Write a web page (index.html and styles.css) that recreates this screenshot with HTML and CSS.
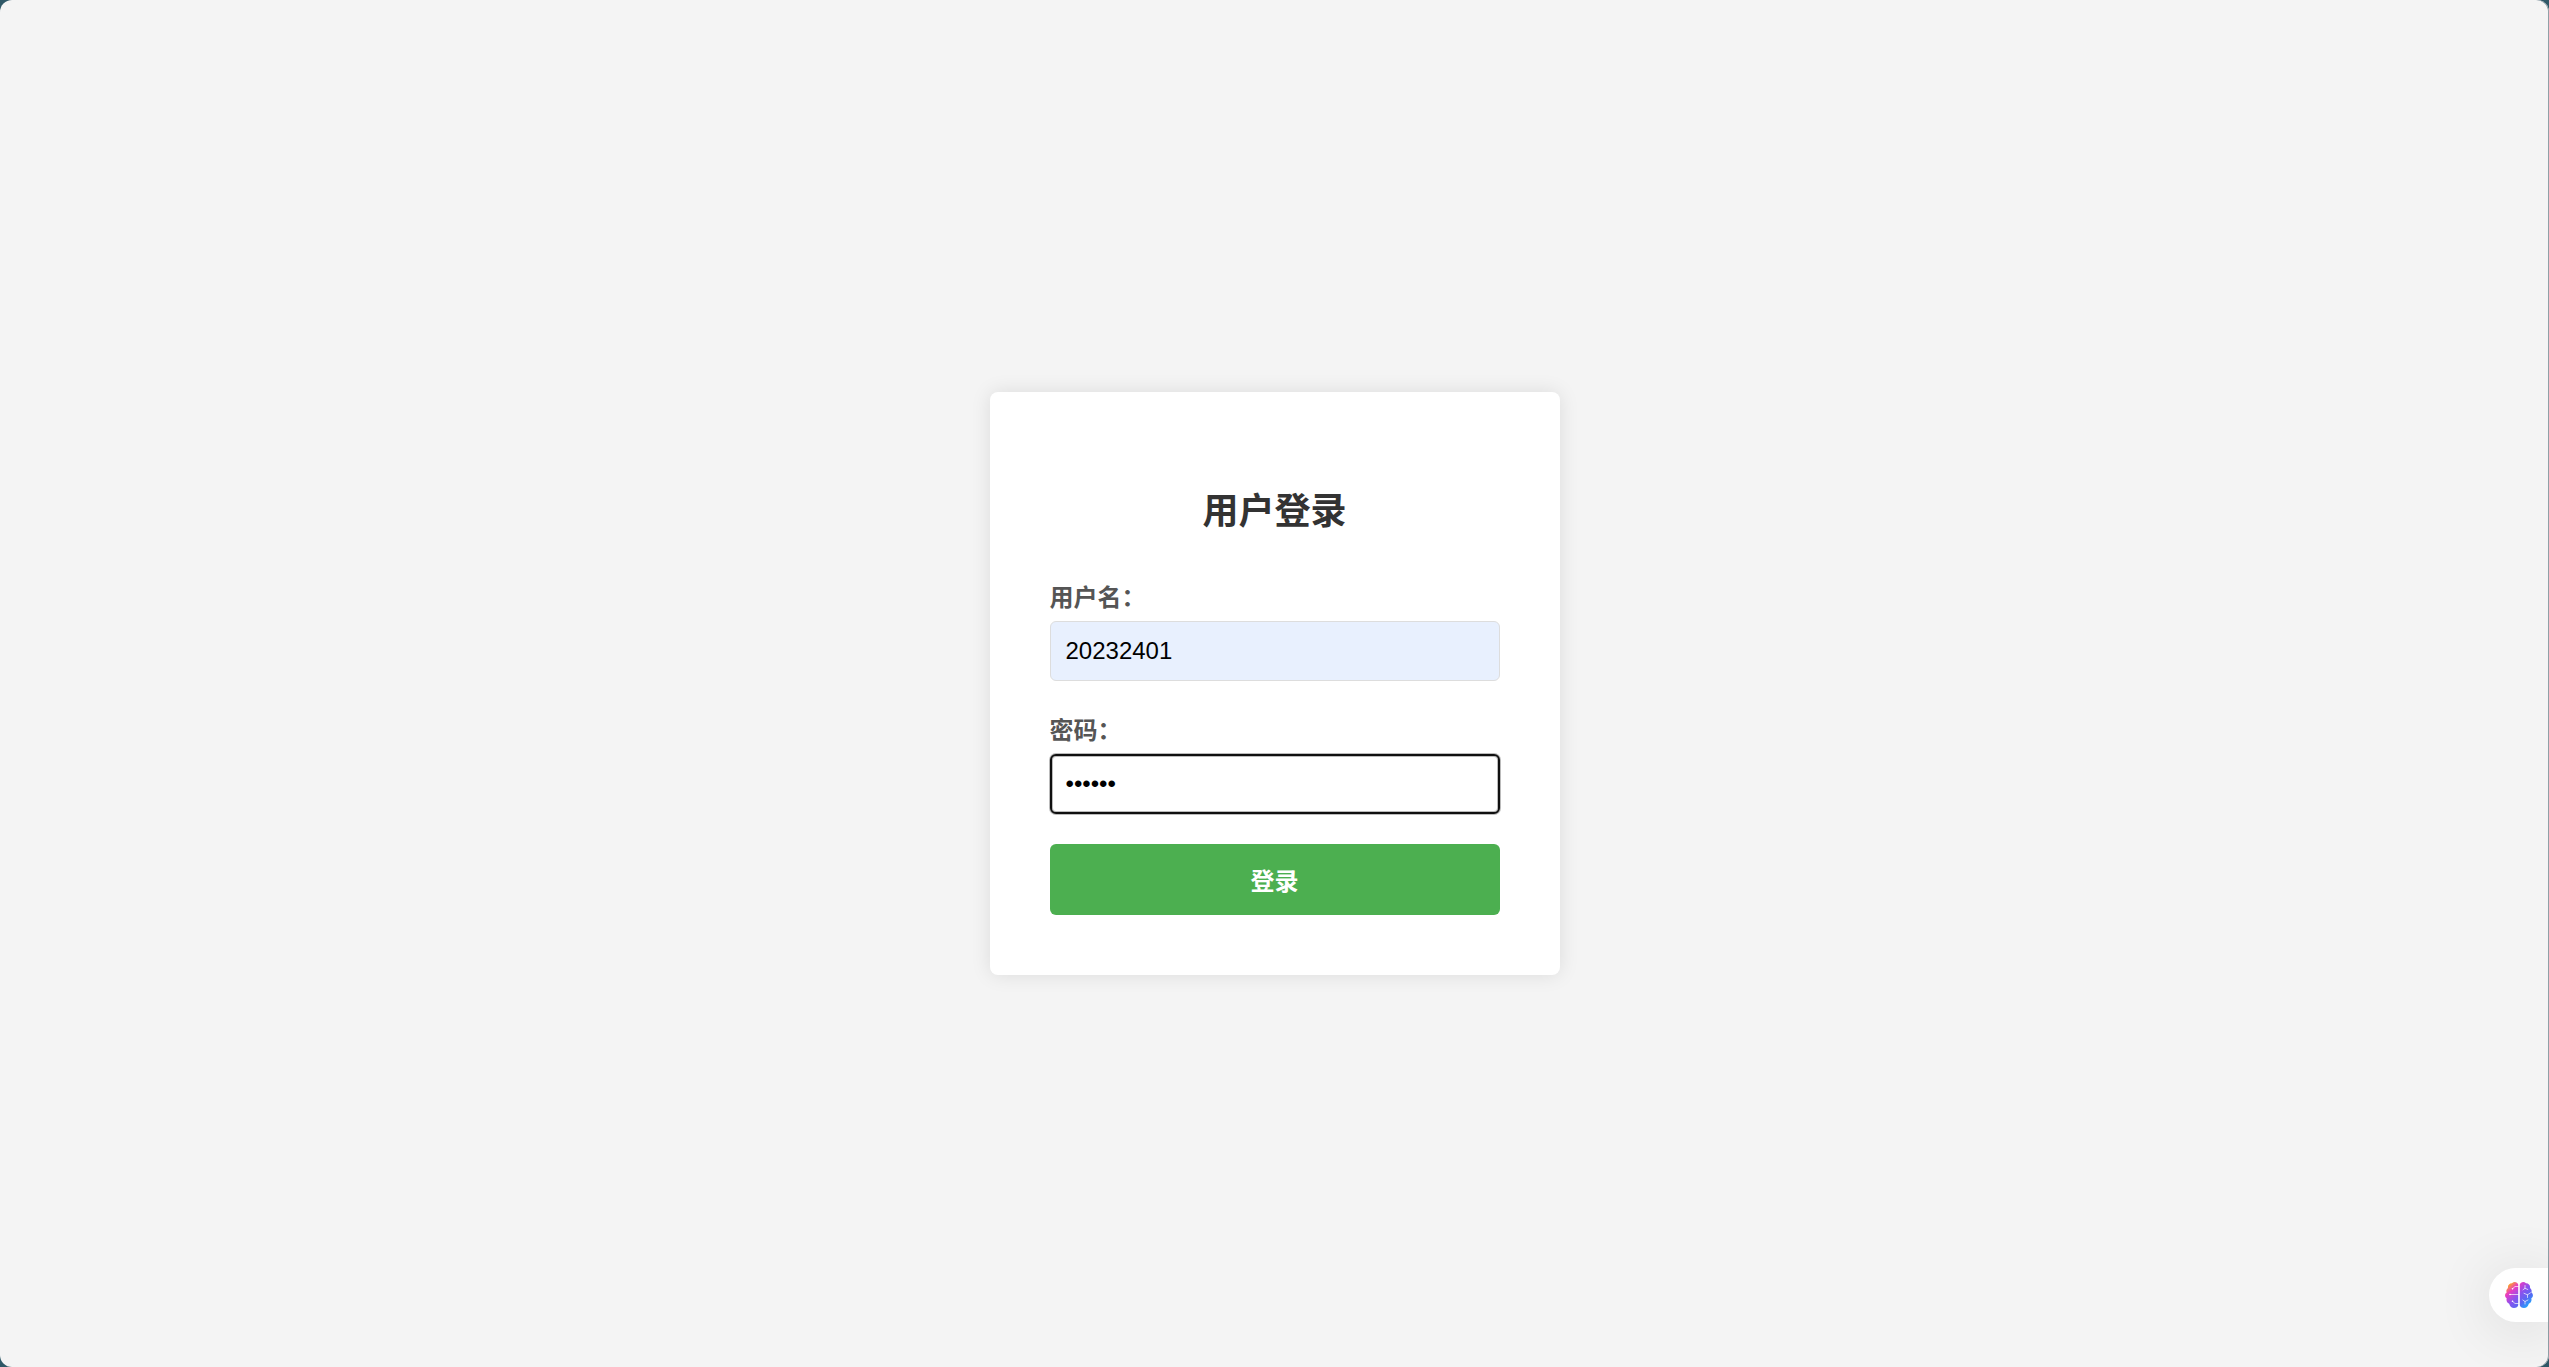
FILE: index.html
```html
<!DOCTYPE html>
<html lang="zh-CN">

<head>
    <meta charset="utf-8" />
    <meta name="viewport" content="width=device-width, initial-scale=1.0">
    <title>用户登录</title>
    <link rel="stylesheet" href="styles.css">
</head>

<body>
    <main class="page">
        <form class="login-container">
            <h2 class="login-title">用户登录</h2>
            <div class="form-group">
                <label for="username">用户名&#65306;</label>
                <input type="text" class="filled" id="username" name="username" value="20232401" required>
            </div>
            <div class="form-group">
                <label for="password">密码&#65306;</label>
                <input type="password" class="active" id="password" name="password" value="123456" required>
            </div>
            <button type="submit" class="login-btn">登录</button>
        </form>
    </main>

    <button type="button" class="assistant-btn" aria-label="AI">
        <svg class="brain-icon" viewBox="0 0 28 28" aria-hidden="true">
            <defs>
                <linearGradient id="brainFill" x1="0" y1="0" x2="1" y2="1">
                    <stop offset="0.1" stop-color="#ffae1a" />
                    <stop offset="0.28" stop-color="#e83bc4" />
                    <stop offset="0.5" stop-color="#8a52ee" />
                    <stop offset="0.7" stop-color="#5968f2" />
                    <stop offset="0.92" stop-color="#16b4ff" />
                </linearGradient>
            </defs>
            <path fill="url(#brainFill)" d="M13.2 3.5C12.5 1 9 .2 7 2.3 4.400 2.200 2.500 4.400 3 7 1.300 8.200 1 10 1.700 11.500-.6 13-.4 16 1.700 17.200 1 20 2 22 4.200 22.700 4.800 25.400 6.800 27 9 27c2.200 0 4-1 4.200-3zM14.800 3.500C15.500 1 19 .2 21 2.300c2.600-.1 4.500 2.100 4 4.700 1.700 1.200 2 3 1.300 4.500 2.300 1.500 2.100 4.500 0 5.700.7 2.800-.3 4.800-2.500 5.500-.6 2.700-2.600 4.300-4.800 4.300-2.200 0-4-1-4.200-3z" />
            <g fill="none" stroke="#fff" stroke-opacity="0.75" stroke-width="0.9" stroke-linecap="round" stroke-linejoin="round">
                <path d="M13.500 5.500H10L7.500 7.800M13.500 13.500H5M13.500 22.500H10L7.500 20.300" />
                <path d="M18 8.800l2-1.500V4.500M20 7.300l2.800 1.200M19 12.300l3.500 1.500 3-2M22.500 13.800v2.700M17.800 19l2.200 1.500 3-1.500M20 20.500v2.500" />
            </g>
            <g fill="#fff">
                <circle cx="7.500" cy="7.800" r="0.8" />
                <circle cx="5" cy="13.500" r="0.8" />
                <circle cx="7.500" cy="20.300" r="0.8" />
            </g>
        </svg>
    </button>
</body>

</html>
```
FILE: styles.css
```css
* {
    box-sizing: border-box;
}

html {
    background-color: #2f5867;
}

body {
    margin: 0;
    font-family: "Liberation Sans", "Noto Sans CJK SC", sans-serif;
}

.page {
    display: flex;
    justify-content: center;
    align-items: center;
    min-height: 100vh;
    background-color: #f4f4f4;
    border-radius: 12px;
    box-shadow: inset -1px 0 0 #8fa0a7;
}

.login-container {
    width: 570px;
    padding: 60px;
    background-color: white;
    border-radius: 8px;
    box-shadow: 0 0 20px rgba(0, 0, 0, 0.1);
}

.login-title {
    margin: 30px 0 36px;
    color: #333;
    font-size: 36px;
    line-height: 60px;
    text-align: center;
}

.form-group {
    margin-bottom: 30px;
}

.form-group label {
    display: block;
    margin-bottom: 7px;
    color: #555;
    font-family: "Noto Sans CJK SC", sans-serif;
    font-size: 24px;
    font-weight: bold;
    line-height: 36px;
}

.form-group input {
    display: block;
    width: 100%;
    height: 60px;
    padding: 0 15px;
    border: 1px solid #ddd;
    border-radius: 6px;
    outline: none;
    color: black;
    font-family: "Liberation Sans", sans-serif;
    font-size: 24px;
}

.form-group .filled {
    background-color: #e8f0fe;
}

.form-group .active {
    padding: 0 14px;
    border: 2px solid #101010;
    box-shadow: 0 0 0 1px #bbb, inset 0 0 0 1px #bbb;
}

.login-btn {
    display: block;
    width: 100%;
    height: 71px;
    padding: 0;
    border: none;
    border-radius: 6px;
    background-color: #4caf50;
    color: white;
    font-family: "Noto Sans CJK SC", sans-serif;
    font-size: 24px;
    font-weight: bold;
    cursor: pointer;
}

.login-btn:hover {
    background-color: #45a049;
}

/* floating tab on the right edge */
.assistant-btn {
    position: fixed;
    right: 1px;
    bottom: 45px;
    display: flex;
    align-items: center;
    width: 59px;
    height: 54px;
    padding: 0 0 0 16px;
    border: none;
    border-radius: 27px 0 0 27px;
    background-color: white;
    box-shadow: 0 6px 60px rgba(0, 0, 0, 0.12);
    cursor: pointer;
}

.brain-icon {
    width: 28px;
    height: 28px;
}
```
